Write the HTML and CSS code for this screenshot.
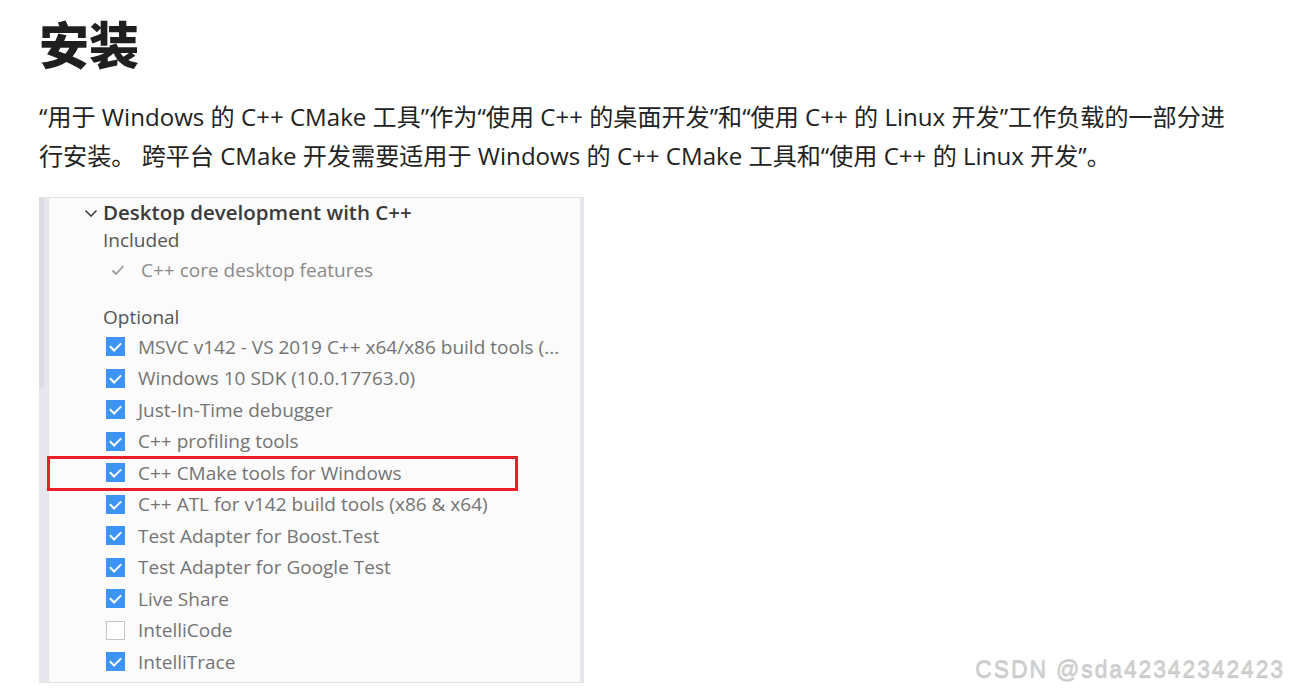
FILE: index.html
```
<!DOCTYPE html>
<html lang="zh-CN">
<head>
<meta charset="utf-8">
<title>安装</title>
<link rel="stylesheet" href="styles.css">
</head>
<body>
<main class="article">
  <h1 class="title">安装</h1>
  <p class="intro">“用于 Windows 的 C++ CMake 工具”作为“使用 C++ 的桌面开发”和“使用 C++ 的 Linux 开发”工作负载的一部分进行安装。 跨平台 CMake 开发需要适用于 Windows 的 C++ CMake 工具和“使用 C++ 的 Linux 开发”。</p>
  <div class="panel">
    <div class="scroll"><div class="thumb"></div></div>
    <div class="panel-body">
      <div class="row head">
        <svg class="chev" width="14" height="10" viewBox="0 0 14 10"><path d="M1.5 2.5 L7 8 L12.5 2.5" fill="none" stroke="#444" stroke-width="1.6"/></svg>
        <span>Desktop development with C++</span>
      </div>
      <div class="row group">Included</div>
      <div class="row core">
        <svg class="tick" width="14" height="12" viewBox="0 0 14 12"><path d="M1.5 6.5 L5 10 L12.5 2" fill="none" stroke="#9a9a9a" stroke-width="1.8"/></svg>
        <span>C++ core desktop features</span>
      </div>
      <div class="row group optional">Optional</div>
      <div class="row item"><span class="cb on"></span>MSVC v142 - VS 2019 C++ x64/x86 build tools (...</div>
      <div class="row item"><span class="cb on"></span>Windows 10 SDK (10.0.17763.0)</div>
      <div class="row item"><span class="cb on"></span>Just-In-Time debugger</div>
      <div class="row item"><span class="cb on"></span>C++ profiling tools</div>
      <div class="row item marked"><span class="cb on"></span>C++ CMake tools for Windows<span class="redbox"></span></div>
      <div class="row item"><span class="cb on"></span>C++ ATL for v142 build tools (x86 &amp; x64)</div>
      <div class="row item"><span class="cb on"></span>Test Adapter for Boost.Test</div>
      <div class="row item"><span class="cb on"></span>Test Adapter for Google Test</div>
      <div class="row item"><span class="cb on"></span>Live Share</div>
      <div class="row item"><span class="cb"></span>IntelliCode</div>
      <div class="row item"><span class="cb on"></span>IntelliTrace</div>
    </div>
    <div class="edge"></div>
  </div>
</main>
<div class="watermark">CSDN @sda42342342423</div>
</body>
</html>
```
FILE: styles.css
```
html, body {
  margin: 0;
  padding: 0;
  background: #ffffff;
}
body {
  width: 1289px;
  height: 693px;
  overflow: hidden;
  position: relative;
  font-family: "Open Sans", "Noto Sans CJK SC", sans-serif;
  color: #222222;
}
.article {
  padding: 16px 0 0 39px;
}
.title {
  margin: 0;
  font-family: "Noto Sans CJK SC", sans-serif;
  font-weight: 900;
  font-size: 50px;
  line-height: 52px;
  color: #1f1f1f;
}
.intro {
  margin: 29px 0 0 0;
  width: 1198px;
  font-size: 24.1px;
  line-height: 39px;
  color: #222222;
}
.panel {
  margin-top: 22px;
  width: 545px;
  height: 486px;
  display: flex;
  background: #fbfbfb;
  border-top: 1px solid #e2e2e2;
  border-bottom: 1px solid #e2e2e2;
  box-sizing: border-box;
}
.scroll {
  width: 10px;
  background: #e6e6ec;
  flex: none;
}
.thumb {
  width: 5px;
  height: 190px;
  background: #dcdce2;
}
.edge {
  width: 4px;
  background: #e6e6ec;
  flex: none;
  margin-left: auto;
}
.panel-body {
  flex: 1;
  padding-top: 0;
  display: flex;
  flex-direction: column;
  font-size: 19px;
  color: #747474;
}
.row {
  display: flex;
  align-items: center;
  height: 28px;
  white-space: nowrap;
}
.head {
  padding-left: 35px;
  font-weight: 600;
  color: #3a3a3a;
  font-size: 20.5px;
}
.chev {
  margin-right: 5px;
  margin-top: 2px;
}
.group {
  padding-left: 54px;
  color: #555555;
}
.core {
  padding-left: 62px;
  height: 32px;
  color: #8a8a8a;
}
.tick {
  margin-right: 16px;
}
.optional {
  margin-top: 17px;
}
.item {
  height: 31.5px;
  padding-left: 57px;
  position: relative;
}
.cb {
  width: 19px;
  height: 19px;
  box-sizing: border-box;
  margin-right: 13px;
  border: 1px solid #c4c4c4;
  background: #ffffff;
  flex: none;
  position: relative;
}
.cb.on {
  background: #3d94f6;
  border-color: #3d94f6;
}
.cb.on::after {
  content: "";
  position: absolute;
  left: 5px;
  top: 2px;
  width: 5px;
  height: 9px;
  border-right: 2.5px solid #ffffff;
  border-bottom: 2.5px solid #ffffff;
  transform: rotate(45deg);
}
.redbox {
  position: absolute;
  left: -2px;
  top: -1px;
  width: 471px;
  height: 35px;
  box-sizing: border-box;
  border: 3px solid #e8202a;
}
.watermark {
  position: absolute;
  right: 4px;
  top: 656px;
  font-family: "Liberation Sans", sans-serif;
  font-size: 23px;
  color: #d0d0d0;
  text-shadow: 0 1px 1px #bdbdbd;
  letter-spacing: 1.85px;
}
```
